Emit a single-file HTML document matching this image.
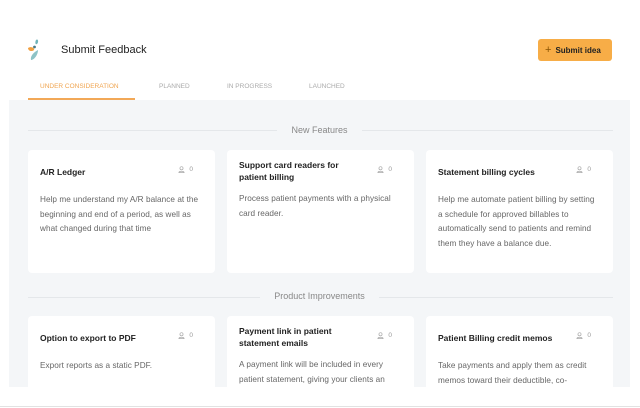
<!DOCTYPE html>
<html><head><style>
*{margin:0;padding:0;box-sizing:border-box}
body{width:640px;height:408px;background:#fff;font-family:"Liberation Sans",sans-serif;position:relative;overflow:hidden;color:#222}
.title{position:absolute;left:61px;top:44px;font-size:11px;color:#222}
.btn{position:absolute;left:538px;top:39px;width:74px;height:22px;background:#f7ad47;border-radius:3px;font-size:8px;font-weight:bold;color:#222;line-height:22px;padding-left:7px}
.btn span{color:#8a5200;font-weight:normal;font-size:11px;margin-right:4px}
.tab{position:absolute;top:83px;font-size:6.5px;color:#aaa}
.ul{position:absolute;left:28px;top:98px;width:107px;height:2px;background:#f2a857}
.main{position:absolute;left:9px;top:100px;width:621px;height:287px;background:#f4f6f8}
.sec{position:absolute;left:19px;width:585px;height:1px;background:#e4e7ea}
.sect{position:absolute;width:100%;text-align:center;font-size:9px;color:#888}
.sect b{background:#f4f6f8;padding:0 14px;font-weight:normal}
.card{position:absolute;width:187px;background:#fff;border-radius:4px;padding:10px 12px}
.card h3{font-size:8.5px;font-weight:bold;color:#222;line-height:13px;width:125px}
.card p{font-size:8.2px;color:#666;line-height:14.5px;margin-top:14px;letter-spacing:0.05px}
.card.t2{padding-top:9px}
.card.t2 h3{line-height:12px}
.card.t2 p{margin-top:9px}
.v{position:absolute;right:22px;top:16px;font-size:6.5px;color:#999;display:flex;align-items:center;gap:4px}
.bot{position:absolute;left:0;top:406px;width:640px;height:1px;background:#e2e2e2}
</style></head><body>
<svg style="position:absolute;left:26px;top:38px" width="20" height="24" viewBox="0 0 20 24">
<path d="M10 2 C12 0 13 4 11 6 C9 7 9 4 10 2Z" fill="#6fb3b8"/>
<circle cx="8.5" cy="9" r="1.4" fill="#4a7a86"/>
<path d="M2 10 C5 8 9 10 8 12 C6 14 2 13 2 10Z" fill="#f2a040"/>
<path d="M12 12 C8 14 4 18 5 22 C8 22 12 17 12 12Z" fill="#8ec3c6"/>
</svg>
<div class="title">Submit Feedback</div>
<div class="btn"><span>+</span>Submit idea</div>
<div class="tab" style="left:40px;color:#f0a550">UNDER CONSIDERATION</div>
<div class="tab" style="left:159px">PLANNED</div>
<div class="tab" style="left:227px">IN PROGRESS</div>
<div class="tab" style="left:309px">LAUNCHED</div>
<div class="ul"></div>
<div class="main">
<div class="sec" style="top:30px"></div><div class="sect" style="top:25px"><b>New Features</b></div>
<div class="sec" style="top:197px"></div><div class="sect" style="top:191px"><b>Product Improvements</b></div>
</div>
<svg width="0" height="0" style="position:absolute"><defs><symbol id="u" viewBox="0 0 8 8"><circle cx="4" cy="2.6" r="1.8" fill="none" stroke="#aaa" stroke-width=".8"/><path d="M1 7.6C1 5.5 7 5.5 7 7.6Z" fill="none" stroke="#aaa" stroke-width=".8"/></symbol></defs></svg>
<div class="card" style="left:28px;top:150px;height:123px;padding-top:16px"><h3>A/R Ledger</h3><div class="v"><svg width="7" height="7"><use href="#u"/></svg>0</div><p>Help me understand my A/R balance at the beginning and end of a period, as well as what changed during that time</p></div>
<div class="card t2" style="left:227px;top:150px;height:123px"><h3>Support card readers for patient billing</h3><div class="v"><svg width="7" height="7"><use href="#u"/></svg>0</div><p>Process patient payments with a physical card reader.</p></div>
<div class="card" style="left:426px;top:150px;height:123px;padding-top:16px"><h3>Statement billing cycles</h3><div class="v"><svg width="7" height="7"><use href="#u"/></svg>0</div><p>Help me automate patient billing by setting a schedule for approved billables to automatically send to patients and remind them they have a balance due.</p></div>
<div class="card" style="left:28px;top:316px;height:71px;padding-top:16px;border-radius:4px 4px 0 0"><h3>Option to export to PDF</h3><div class="v"><svg width="7" height="7"><use href="#u"/></svg>0</div><p>Export reports as a static PDF.</p></div>
<div class="card t2" style="left:227px;top:316px;height:71px;border-radius:4px 4px 0 0"><h3>Payment link in patient statement emails</h3><div class="v"><svg width="7" height="7"><use href="#u"/></svg>0</div><p>A payment link will be included in every patient statement, giving your clients an</p></div>
<div class="card" style="left:426px;top:316px;height:71px;padding-top:16px;border-radius:4px 4px 0 0"><h3>Patient Billing credit memos</h3><div class="v"><svg width="7" height="7"><use href="#u"/></svg>0</div><p>Take payments and apply them as credit memos toward their deductible, co-</p></div>
<div class="bot"></div>
</body></html>
